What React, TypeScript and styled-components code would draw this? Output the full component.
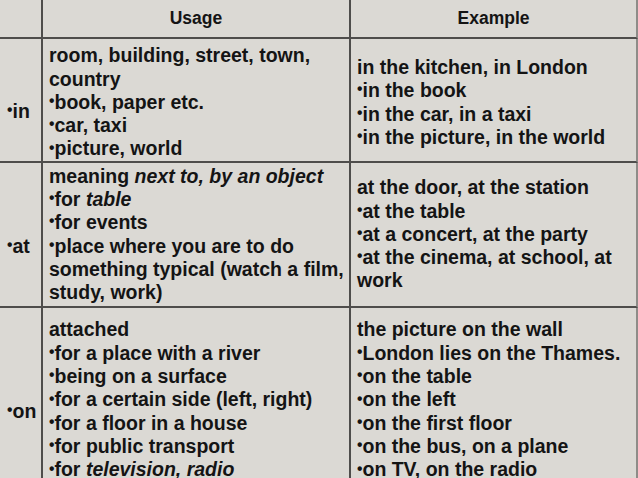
import React from 'react';
import styled, { createGlobalStyle } from 'styled-components';

const BG = '#dbd9d4';
const RULE = '#4e4d4b';

const GlobalStyle = createGlobalStyle`
  html, body {
    margin: 0;
    padding: 0;
    overflow: hidden;
    background: ${BG};
  }
`;

const Table = styled.div`
  display: grid;
  grid-template-columns: 43px 308px 287px;
  width: 638px;
  font-family: "Liberation Sans", Arial, sans-serif;
  font-weight: bold;
  color: #141414;
  background: ${BG};
`;

const Cell = styled.div<{ $h: number; $last?: boolean; $shift?: number }>`
  box-sizing: border-box;
  height: ${({ $h }) => $h}px;
  border-bottom: 2px solid ${RULE};
  border-right: 2px solid ${({ $last }) => ($last ? '#8e8c88' : RULE)};
  display: flex;
  flex-direction: column;
  justify-content: center;
  padding-left: 6px;
  padding-top: ${({ $shift }) => $shift ?? 0}px;
  overflow: hidden;
`;

const HeadCell = styled(Cell)`
  align-items: center;
  padding-left: 0;
  font-size: 17.5px;
`;

const LabelCell = styled(Cell)`
  padding-left: 7px;
  padding-top: 23px;
  font-size: 19.5px;
  white-space: nowrap;
`;

const Line = styled.div`
  font-size: 19.5px;
  line-height: 23.33px;
  white-space: nowrap;
`;

const Dot = styled.span`
  display: inline-block;
  font-size: 0.8em;
  line-height: 1;
  vertical-align: 0.18em;
`;

const Em = styled.em`
  font-style: italic;
`;

const B = () => <Dot>•</Dot>;

type Row = {
  label: string;
  height: number;
  shift: number;
  usage: React.ReactNode[];
  example: React.ReactNode[];
};

const rows: Row[] = [
  {
    label: 'in',
    height: 124,
    shift: 5,
    usage: [
      'room, building, street, town,',
      'country',
      <><B />book, paper etc.</>,
      <><B />car, taxi</>,
      <><B />picture, world</>,
    ],
    example: [
      'in the kitchen, in London',
      <><B />in the book</>,
      <><B />in the car, in a taxi</>,
      <><B />in the picture, in the world</>,
    ],
  },
  {
    label: 'at',
    height: 145,
    shift: 0,
    usage: [
      <>meaning <Em>next to, by an object</Em></>,
      <><B />for <Em>table</Em></>,
      <><B />for events</>,
      <><B />place where you are to do</>,
      'something typical (watch a film,',
      'study, work)',
    ],
    example: [
      'at the door, at the station',
      <><B />at the table</>,
      <><B />at a concert, at the party</>,
      <><B />at the cinema, at school, at</>,
      'work',
    ],
  },
  {
    label: 'on',
    height: 186,
    shift: 0,
    usage: [
      'attached',
      <><B />for a place with a river</>,
      <><B />being on a surface</>,
      <><B />for a certain side (left, right)</>,
      <><B />for a floor in a house</>,
      <><B />for public transport</>,
      <><B />for <Em>television, radio</Em></>,
    ],
    example: [
      'the picture on the wall',
      <><B />London lies on the Thames.</>,
      <><B />on the table</>,
      <><B />on the left</>,
      <><B />on the first floor</>,
      <><B />on the bus, on a plane</>,
      <><B />on TV, on the radio</>,
    ],
  },
];

export default function App() {
  return (
    <>
      <GlobalStyle />
      <Table>
        <HeadCell $h={39} />
        <HeadCell $h={39}>Usage</HeadCell>
        <HeadCell $h={39} $last>Example</HeadCell>
        {rows.map((row) => (
          <React.Fragment key={row.label}>
            <LabelCell $h={row.height}>
              <span><B />{row.label}</span>
            </LabelCell>
            <Cell $h={row.height} $shift={row.shift}>
              {row.usage.map((l, i) => <Line key={i}>{l}</Line>)}
            </Cell>
            <Cell $h={row.height} $shift={row.shift} $last>
              {row.example.map((l, i) => <Line key={i}>{l}</Line>)}
            </Cell>
          </React.Fragment>
        ))}
      </Table>
    </>
  );
}
